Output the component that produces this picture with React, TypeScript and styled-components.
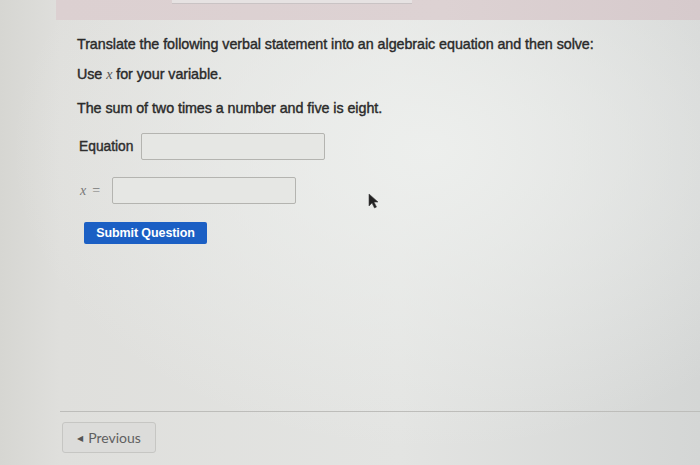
import React from "react";
import styled, { createGlobalStyle } from "styled-components";

const Global = createGlobalStyle`
  html, body { margin: 0; padding: 0; }
  body {
    width: 700px; height: 465px; overflow: hidden;
    font-family: "Liberation Sans", Arial, sans-serif;
    background: #dcdcd9;
  }
`;

const Page = styled.div`
  position: relative;
  width: 700px;
  height: 465px;
  display: flex;
  flex-direction: column;
  background:
    radial-gradient(ellipse 420px 300px at 430px 150px, rgba(238,240,238,0.9), rgba(238,240,238,0) 100%),
    linear-gradient(90deg, #d6d6d2 0px, #dfdfdc 60px, #e3e4e2 400px, #d4d6d5 700px);
`;

const TopBand = styled.div`
  height: 20px;
  margin-left: 56px;
  background: linear-gradient(90deg, #dcd0d1, #ddd2d3 60%, #d6cacc);
  display: flex;
`;

const Tab = styled.div`
  margin-left: 116px;
  width: 240px;
  height: 3px;
  background: #e6e2e2;
  border-bottom: 1px solid #c9c3c4;
`;

const Content = styled.div`
  flex: 1;
  padding: 16px 0 0 77px;
  display: flex;
  flex-direction: column;
  color: #2a2a2a;
`;

const Para = styled.p<{ $mt: number }>`
  margin: ${(p) => p.$mt}px 0 0 0;
  font-size: 14.3px;
  line-height: 16px;
  font-weight: normal;
  letter-spacing: -0.05px;
  -webkit-text-stroke: 0.4px #2a2a2a;
`;

const MathX = styled.i`
  font-family: "Liberation Serif", "Times New Roman", serif;
  font-size: 14px;
  font-weight: normal;
  color: #555;
  -webkit-text-stroke: 0;
`;

const Row = styled.div<{ $mt: number; $indent: number }>`
  margin-top: ${(p) => p.$mt}px;
  margin-left: ${(p) => p.$indent}px;
  display: flex;
  align-items: center;
  gap: 8px;
`;

const Label = styled.span`
  font-size: 13.8px;
  font-weight: normal;
  color: #2e2e2e;
  -webkit-text-stroke: 0.4px #2e2e2e;
`;

const MathLabel = styled.span`
  font-family: "Liberation Serif", "Times New Roman", serif;
  font-size: 14px;
  color: #777;
  display: flex;
  gap: 6px;
  width: 24px;
`;

const Input = styled.div`
  width: 182px;
  height: 25px;
  border: 1.5px solid #b4b4b0;
  border-radius: 2px;
  background: #e6e7e4;
`;

const SubmitBtn = styled.button`
  margin-top: 18px;
  margin-left: 7px;
  align-self: flex-start;
  width: 123px;
  height: 22px;
  border: none;
  border-radius: 2px;
  background: #1b5fc4;
  color: #fff;
  font-family: "Liberation Sans", Arial, sans-serif;
  font-size: 12.5px;
  font-weight: bold;
  padding: 0;
  letter-spacing: -0.1px;
`;

const Footer = styled.div`
  margin-left: 60px;
  height: 54px;
  border-top: 1.5px solid #bdbdba;
  padding-top: 10px;
  box-sizing: border-box;
`;

const PrevBtn = styled.button`
  margin-left: 2px;
  width: 94px;
  height: 31px;
  border: 1.5px solid #c6c6c3;
  border-radius: 3px;
  background: #dcdcda;
  color: #606060;
  font-family: Lato, "Liberation Sans", sans-serif;
  font-size: 14px;
  display: flex;
  align-items: center;
  justify-content: center;
  gap: 5px;
  padding: 0;
`;

const Tri = styled.span`
  font-size: 8px;
  color: #555;
`;

const Cursor = styled.svg`
  position: absolute;
  left: 368px;
  top: 193px;
`;

export default function App() {
  return (
    <Page>
      <Global />
      <TopBand>
        <Tab />
      </TopBand>
      <Content>
        <Para $mt={0}>Translate the following verbal statement into an algebraic equation and then solve:</Para>
        <Para $mt={14}>
          Use <MathX>x</MathX> for your variable.
        </Para>
        <Para $mt={17}>The sum of two times a number and five is eight.</Para>
        <Row $mt={17} $indent={2}>
          <Label>Equation</Label>
          <Input />
        </Row>
        <Row $mt={17} $indent={3}>
          <MathLabel>
            <i>x</i>
            <span>=</span>
          </MathLabel>
          <Input />
        </Row>
        <SubmitBtn>Submit Question</SubmitBtn>
      </Content>
      <Footer>
        <PrevBtn>
          <Tri>◀</Tri>Previous
        </PrevBtn>
      </Footer>
      <Cursor width="12" height="16" viewBox="0 0 12 16">
        <path d="M1 1 L1 13 L4 10 L6.5 15 L8.5 14 L6 9 L10 9 Z" fill="#222" stroke="#444" strokeWidth="0.6" />
      </Cursor>
    </Page>
  );
}
